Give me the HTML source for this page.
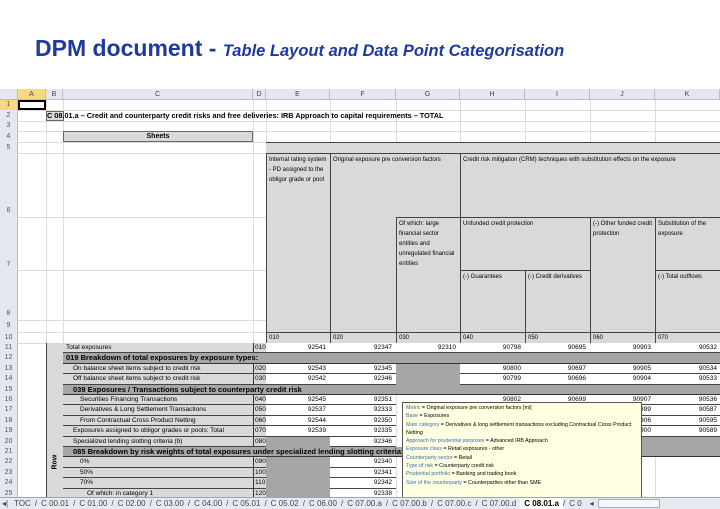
<!DOCTYPE html>
<html><head><meta charset="utf-8"><style>
*{margin:0;padding:0;box-sizing:border-box}
body{width:720px;height:509px;background:#fff;position:relative;overflow:hidden;font-family:"Liberation Sans",sans-serif}
.t{position:absolute;left:35px;top:35px;color:#1f3a9e;font-weight:bold;font-size:23px;white-space:nowrap}
.t i{font-size:16.5px}
.ss{position:absolute;left:0;top:88px;width:720px;height:421px;background:#fff;overflow:hidden;font-size:6.5px;color:#000}
.a{position:absolute;white-space:nowrap;overflow:hidden}
.hd{background:#e4e8ee;border-right:1px solid #b8bec8;border-bottom:1px solid #b8bec8;text-align:center;color:#444;font-size:7px;line-height:11px}
.vl{position:absolute;top:12px;height:409px;border-left:1px solid #dadcdd}
.hl{position:absolute;left:18px;width:702px;border-top:1px solid #dadcdd}
.rn{position:absolute;left:0;width:18px;background:#e4e8ee;border-right:1px solid #b8bec8;color:#555;font-size:7px;text-align:center}
.dk{background:#a6a6a6}
.w{background:#fff}
.row{position:absolute;left:0;width:720px;height:10.4px}
.row .a{top:0;height:10.4px;line-height:10px}
.cC{left:63px;width:190px;background:#d9d9d9;border-bottom:1px solid #444;padding-left:3px}
.cD{left:253px;width:13px;background:#d9d9d9;border-bottom:1px solid #444;border-left:1px solid #333;padding-left:1px}
.n{text-align:right;padding-right:4px;border-bottom:1px solid #444}
.cE{left:266px;width:64px}.cF{left:330px;width:66px}.cG{left:396px;width:64px}.cH{left:460px;width:65px}.cI{left:525px;width:65px}.cJ{left:590px;width:65px}.cK{left:655px;width:66px}
.sec{left:63px;width:657px;background:#a6a6a6;font-weight:bold;font-size:7.5px;border-bottom:1px solid #333;padding-left:3px}
.lab{position:absolute;background:#d9d9d9;border:1px solid #444;font-size:6px;line-height:10px;padding:1px 2px;white-space:normal;overflow:hidden}
.tip{position:absolute;left:402px;top:402px;width:240px;height:96px;background:#ffffe1;border:1px solid #555;font-size:5.3px;line-height:8.3px;padding:1px 3px;color:#000}
.tip b{color:#3a6fb0;font-weight:normal}
.tabs{position:absolute;left:0;top:497px;width:720px;height:12px;background:#e6eaf0;border-top:1px solid #9aa;font-size:8px;line-height:11px;color:#445;white-space:nowrap}
.tabs span{display:inline-block;padding:0 4px}
</style></head><body>
<div class="t">DPM document - <i>Table Layout and Data Point Categorisation</i></div>
<div class="ss">
<div class="a hd" style="left:0;top:1px;width:18px;height:11px"></div>
<div class="a hd" style="left:18px;top:1px;width:28px;height:11px;background:#f8d880">A</div>
<div class="a hd" style="left:46px;top:1px;width:17px;height:11px">B</div>
<div class="a hd" style="left:63px;top:1px;width:190px;height:11px">C</div>
<div class="a hd" style="left:253px;top:1px;width:13px;height:11px">D</div>
<div class="a hd" style="left:266px;top:1px;width:64px;height:11px">E</div>
<div class="a hd" style="left:330px;top:1px;width:66px;height:11px">F</div>
<div class="a hd" style="left:396px;top:1px;width:64px;height:11px">G</div>
<div class="a hd" style="left:460px;top:1px;width:65px;height:11px">H</div>
<div class="a hd" style="left:525px;top:1px;width:65px;height:11px">I</div>
<div class="a hd" style="left:590px;top:1px;width:65px;height:11px">J</div>
<div class="a hd" style="left:655px;top:1px;width:65px;height:11px">K</div>
<div class="vl" style="left:46px"></div><div class="vl" style="left:63px"></div><div class="vl" style="left:253px"></div><div class="vl" style="left:266px"></div><div class="vl" style="left:330px"></div><div class="vl" style="left:396px"></div><div class="vl" style="left:460px"></div><div class="vl" style="left:525px"></div><div class="vl" style="left:590px"></div><div class="vl" style="left:655px"></div>
<div class="hl" style="top:22px"></div><div class="hl" style="top:33px"></div><div class="hl" style="top:43px"></div><div class="hl" style="top:54px"></div><div class="hl" style="top:65px"></div><div class="hl" style="top:129px"></div><div class="hl" style="top:182px"></div><div class="hl" style="top:232px"></div><div class="hl" style="top:244px"></div><div class="hl" style="top:255px"></div>
<div class="rn" style="top:12px;height:10px;background:#f8d880;line-height:10px">1</div>
<div class="rn" style="top:22px;height:11px;line-height:11px">2</div>
<div class="rn" style="top:33px;height:10px;line-height:10px">3</div>
<div class="rn" style="top:43px;height:11px;line-height:11px">4</div>
<div class="rn" style="top:54px;height:11px;line-height:11px">5</div>
<div class="rn" style="top:65px;height:64px;line-height:116px">6</div>
<div class="rn" style="top:129px;height:53px;line-height:96px">7</div>
<div class="rn" style="top:182px;height:50px;line-height:88px">8</div>
<div class="rn" style="top:232px;height:12px;line-height:12px">9</div>
<div class="rn" style="top:244px;height:11px;line-height:11px">10</div>
<div class="rn" style="top:255px;height:10.4px;line-height:10px">11</div>
<div class="rn" style="top:265.4px;height:10.4px;line-height:10px">12</div>
<div class="rn" style="top:275.8px;height:10.4px;line-height:10px">13</div>
<div class="rn" style="top:286.2px;height:10.4px;line-height:10px">14</div>
<div class="rn" style="top:296.6px;height:10.4px;line-height:10px">15</div>
<div class="rn" style="top:307px;height:10.4px;line-height:10px">16</div>
<div class="rn" style="top:317.4px;height:10.4px;line-height:10px">17</div>
<div class="rn" style="top:327.8px;height:10.4px;line-height:10px">18</div>
<div class="rn" style="top:338.2px;height:10.4px;line-height:10px">19</div>
<div class="rn" style="top:348.6px;height:10.4px;line-height:10px">20</div>
<div class="rn" style="top:359px;height:10.4px;line-height:10px">21</div>
<div class="rn" style="top:369.4px;height:10.4px;line-height:10px">22</div>
<div class="rn" style="top:379.8px;height:10.4px;line-height:10px">23</div>
<div class="rn" style="top:390.2px;height:10.4px;line-height:10px">24</div>
<div class="rn" style="top:400.6px;height:10.4px;line-height:10px">25</div>
<div class="a" style="left:18px;top:12px;width:28px;height:10px;border:2px solid #000"></div>
<div class="a" style="left:46px;top:23px;width:18px;height:10px;background:#d9d9d9;border:1px solid #666"></div>
<div class="a" style="left:47px;top:22px;height:11px;line-height:11px;font-weight:bold;font-size:7.3px">C 08.01.a – Credit and counterparty credit risks and free deliveries: IRB Approach to capital requirements – TOTAL</div>
<div class="a" style="left:63px;top:43px;width:190px;height:11px;background:#d9d9d9;border:1px solid #666;text-align:center;font-weight:bold;font-size:7px;line-height:9px">Sheets</div>
<div class="a" style="left:266px;top:54px;width:454px;height:201px;background:#d9d9d9;border-top:1px solid #444"></div>
<div class="lab" style="left:266px;top:65px;width:65px;height:180px">Internal rating system - PD assigned to the obligor grade or pool</div>
<div class="lab" style="left:330px;top:65px;width:131px;height:180px">Original exposure pre conversion factors</div>
<div class="lab" style="left:396px;top:129px;width:65px;height:116px">Of which: large financial sector entities and unregulated financial entities</div>
<div class="lab" style="left:460px;top:65px;width:261px;height:65px">Credit risk mitigation (CRM) techniques with substitution effects on the exposure</div>
<div class="lab" style="left:460px;top:129px;width:131px;height:54px">Unfunded credit protection</div>
<div class="lab" style="left:460px;top:182px;width:66px;height:63px">(-) Guarantees</div>
<div class="lab" style="left:525px;top:182px;width:66px;height:63px">(-) Credit derivatives</div>
<div class="lab" style="left:590px;top:129px;width:66px;height:116px">(-) Other funded credit protection</div>
<div class="lab" style="left:655px;top:129px;width:66px;height:54px">Substitution of the exposure</div>
<div class="lab" style="left:655px;top:182px;width:66px;height:63px">(-) Total outflows</div>
<div class="lab" style="left:266px;top:244px;width:65px;height:12px;line-height:9px">010</div>
<div class="lab" style="left:330px;top:244px;width:67px;height:12px;line-height:9px">020</div>
<div class="lab" style="left:396px;top:244px;width:65px;height:12px;line-height:9px">030</div>
<div class="lab" style="left:460px;top:244px;width:66px;height:12px;line-height:9px">040</div>
<div class="lab" style="left:525px;top:244px;width:66px;height:12px;line-height:9px">050</div>
<div class="lab" style="left:590px;top:244px;width:66px;height:12px;line-height:9px">060</div>
<div class="lab" style="left:655px;top:244px;width:66px;height:12px;line-height:9px">070</div>
<div class="a" style="left:46px;top:255px;width:17px;height:166px;background:#d9d9d9;border-left:1px solid #444"></div>
<div class="a" style="left:47px;top:370px;width:16px;font-weight:bold;font-size:7px;transform:rotate(-90deg)">Row</div>
<div class="row" style="top:255px"><div class="a cC">Total exposures</div><div class="a cD">010</div><div class="a n cE w">92541</div><div class="a n cF w">92347</div><div class="a n cG w">92310</div><div class="a n cH w">90798</div><div class="a n cI w">90695</div><div class="a n cJ w">90903</div><div class="a n cK w">90532</div></div>
<div class="row" style="top:265.4px"><div class="a sec">019 Breakdown of total exposures by exposure types:</div></div>
<div class="row" style="top:275.8px"><div class="a cC" style="padding-left:10px">On balance sheet items subject to credit risk</div><div class="a cD">020</div><div class="a n cE w">92543</div><div class="a n cF w">92345</div><div class="a cG dk"></div><div class="a n cH w">90800</div><div class="a n cI w">90697</div><div class="a n cJ w">90905</div><div class="a n cK w">90534</div></div>
<div class="row" style="top:286.2px"><div class="a cC" style="padding-left:10px">Off balance sheet items subject to credit risk</div><div class="a cD">030</div><div class="a n cE w">92542</div><div class="a n cF w">92346</div><div class="a cG dk"></div><div class="a n cH w">90799</div><div class="a n cI w">90696</div><div class="a n cJ w">90904</div><div class="a n cK w">90533</div></div>
<div class="row" style="top:296.6px"><div class="a sec" style="padding-left:10px">039 Exposures / Transactions subject to counterparty credit risk</div></div>
<div class="row" style="top:307px"><div class="a cC" style="padding-left:17px">Securities Financing Transactions</div><div class="a cD">040</div><div class="a n cE w">92545</div><div class="a n cF w">92351</div><div class="a n cH w">90802</div><div class="a n cI w">90699</div><div class="a n cJ w">90907</div><div class="a n cK w">90536</div></div>
<div class="row" style="top:317.4px"><div class="a cC" style="padding-left:17px">Derivatives &amp; Long Settlement Transactions</div><div class="a cD">050</div><div class="a n cE w">92537</div><div class="a n cF w">92333</div><div class="a n cJ w">90899</div><div class="a n cK w">90587</div></div>
<div class="row" style="top:327.8px"><div class="a cC" style="padding-left:17px">From Contractual Cross Product Netting</div><div class="a cD">060</div><div class="a n cE w">92544</div><div class="a n cF w">92350</div><div class="a n cJ w">90906</div><div class="a n cK w">90595</div></div>
<div class="row" style="top:338.2px"><div class="a cC" style="padding-left:10px">Exposures assigned to obligor grades or pools: Total</div><div class="a cD">070</div><div class="a n cE w">92539</div><div class="a n cF w">92335</div><div class="a n cJ w">90900</div><div class="a n cK w">90589</div></div>
<div class="row" style="top:348.6px"><div class="a cC" style="padding-left:10px">Specialized lending slotting criteria (b)</div><div class="a cD">080</div><div class="a cE dk"></div><div class="a n cF w">92346</div><div class="a cH dk" style="width:260px"></div></div>
<div class="row" style="top:359px"><div class="a sec" style="padding-left:10px">085 Breakdown by risk weights of total exposures under specialized lending slotting criteria:</div></div>
<div class="row" style="top:369.4px"><div class="a cC" style="padding-left:17px">0%</div><div class="a cD">090</div><div class="a cE dk"></div><div class="a n cF w">92340</div></div>
<div class="row" style="top:379.8px"><div class="a cC" style="padding-left:17px">50%</div><div class="a cD">100</div><div class="a cE dk"></div><div class="a n cF w">92341</div></div>
<div class="row" style="top:390.2px"><div class="a cC" style="padding-left:17px">70%</div><div class="a cD">110</div><div class="a cE dk"></div><div class="a n cF w">92342</div></div>
<div class="row" style="top:400.6px"><div class="a cC" style="padding-left:24px">Of which: in category 1</div><div class="a cD">120</div><div class="a cE dk"></div><div class="a n cF w">92338</div></div>
</div>
<div class="tip"><b>Metric</b> = Original exposure pre conversion factors [mi]<br><b>Base</b> = Exposures<br><b>Main category</b> = Derivatives &amp; long settlement transactions excluding Contractual Cross Product<br>Netting<br><b>Approach for prudential purposes</b> = Advanced IRB Approach<br><b>Exposure class</b> = Retail exposures - other<br><b>Counterparty sector</b> = Retail<br><b>Type of risk</b> = Counterparty credit risk<br><b>Prudential portfolio</b> = Banking and trading book<br><b>Size of the counterparty</b> = Counterparties other than SME</div>
<div class="tabs"><span style="padding:0 2px">◂|</span><span>TOC</span>/<span>C 00.01</span>/<span>C 01.00</span>/<span>C 02.00</span>/<span>C 03.00</span>/<span>C 04.00</span>/<span>C 05.01</span>/<span>C 05.02</span>/<span>C 06.00</span>/<span>C 07.00.a</span>/<span>C 07.00.b</span>/<span>C 07.00.c</span>/<span>C 07.00.d</span><span style="background:#fff;font-weight:bold;color:#000">C 08.01.a</span>/<span>C 0</span><span>◂</span><span style="display:inline-block;width:62px;height:9px;background:#f4f6f8;border:1px solid #aab;vertical-align:middle"></span></div>
</body></html>
